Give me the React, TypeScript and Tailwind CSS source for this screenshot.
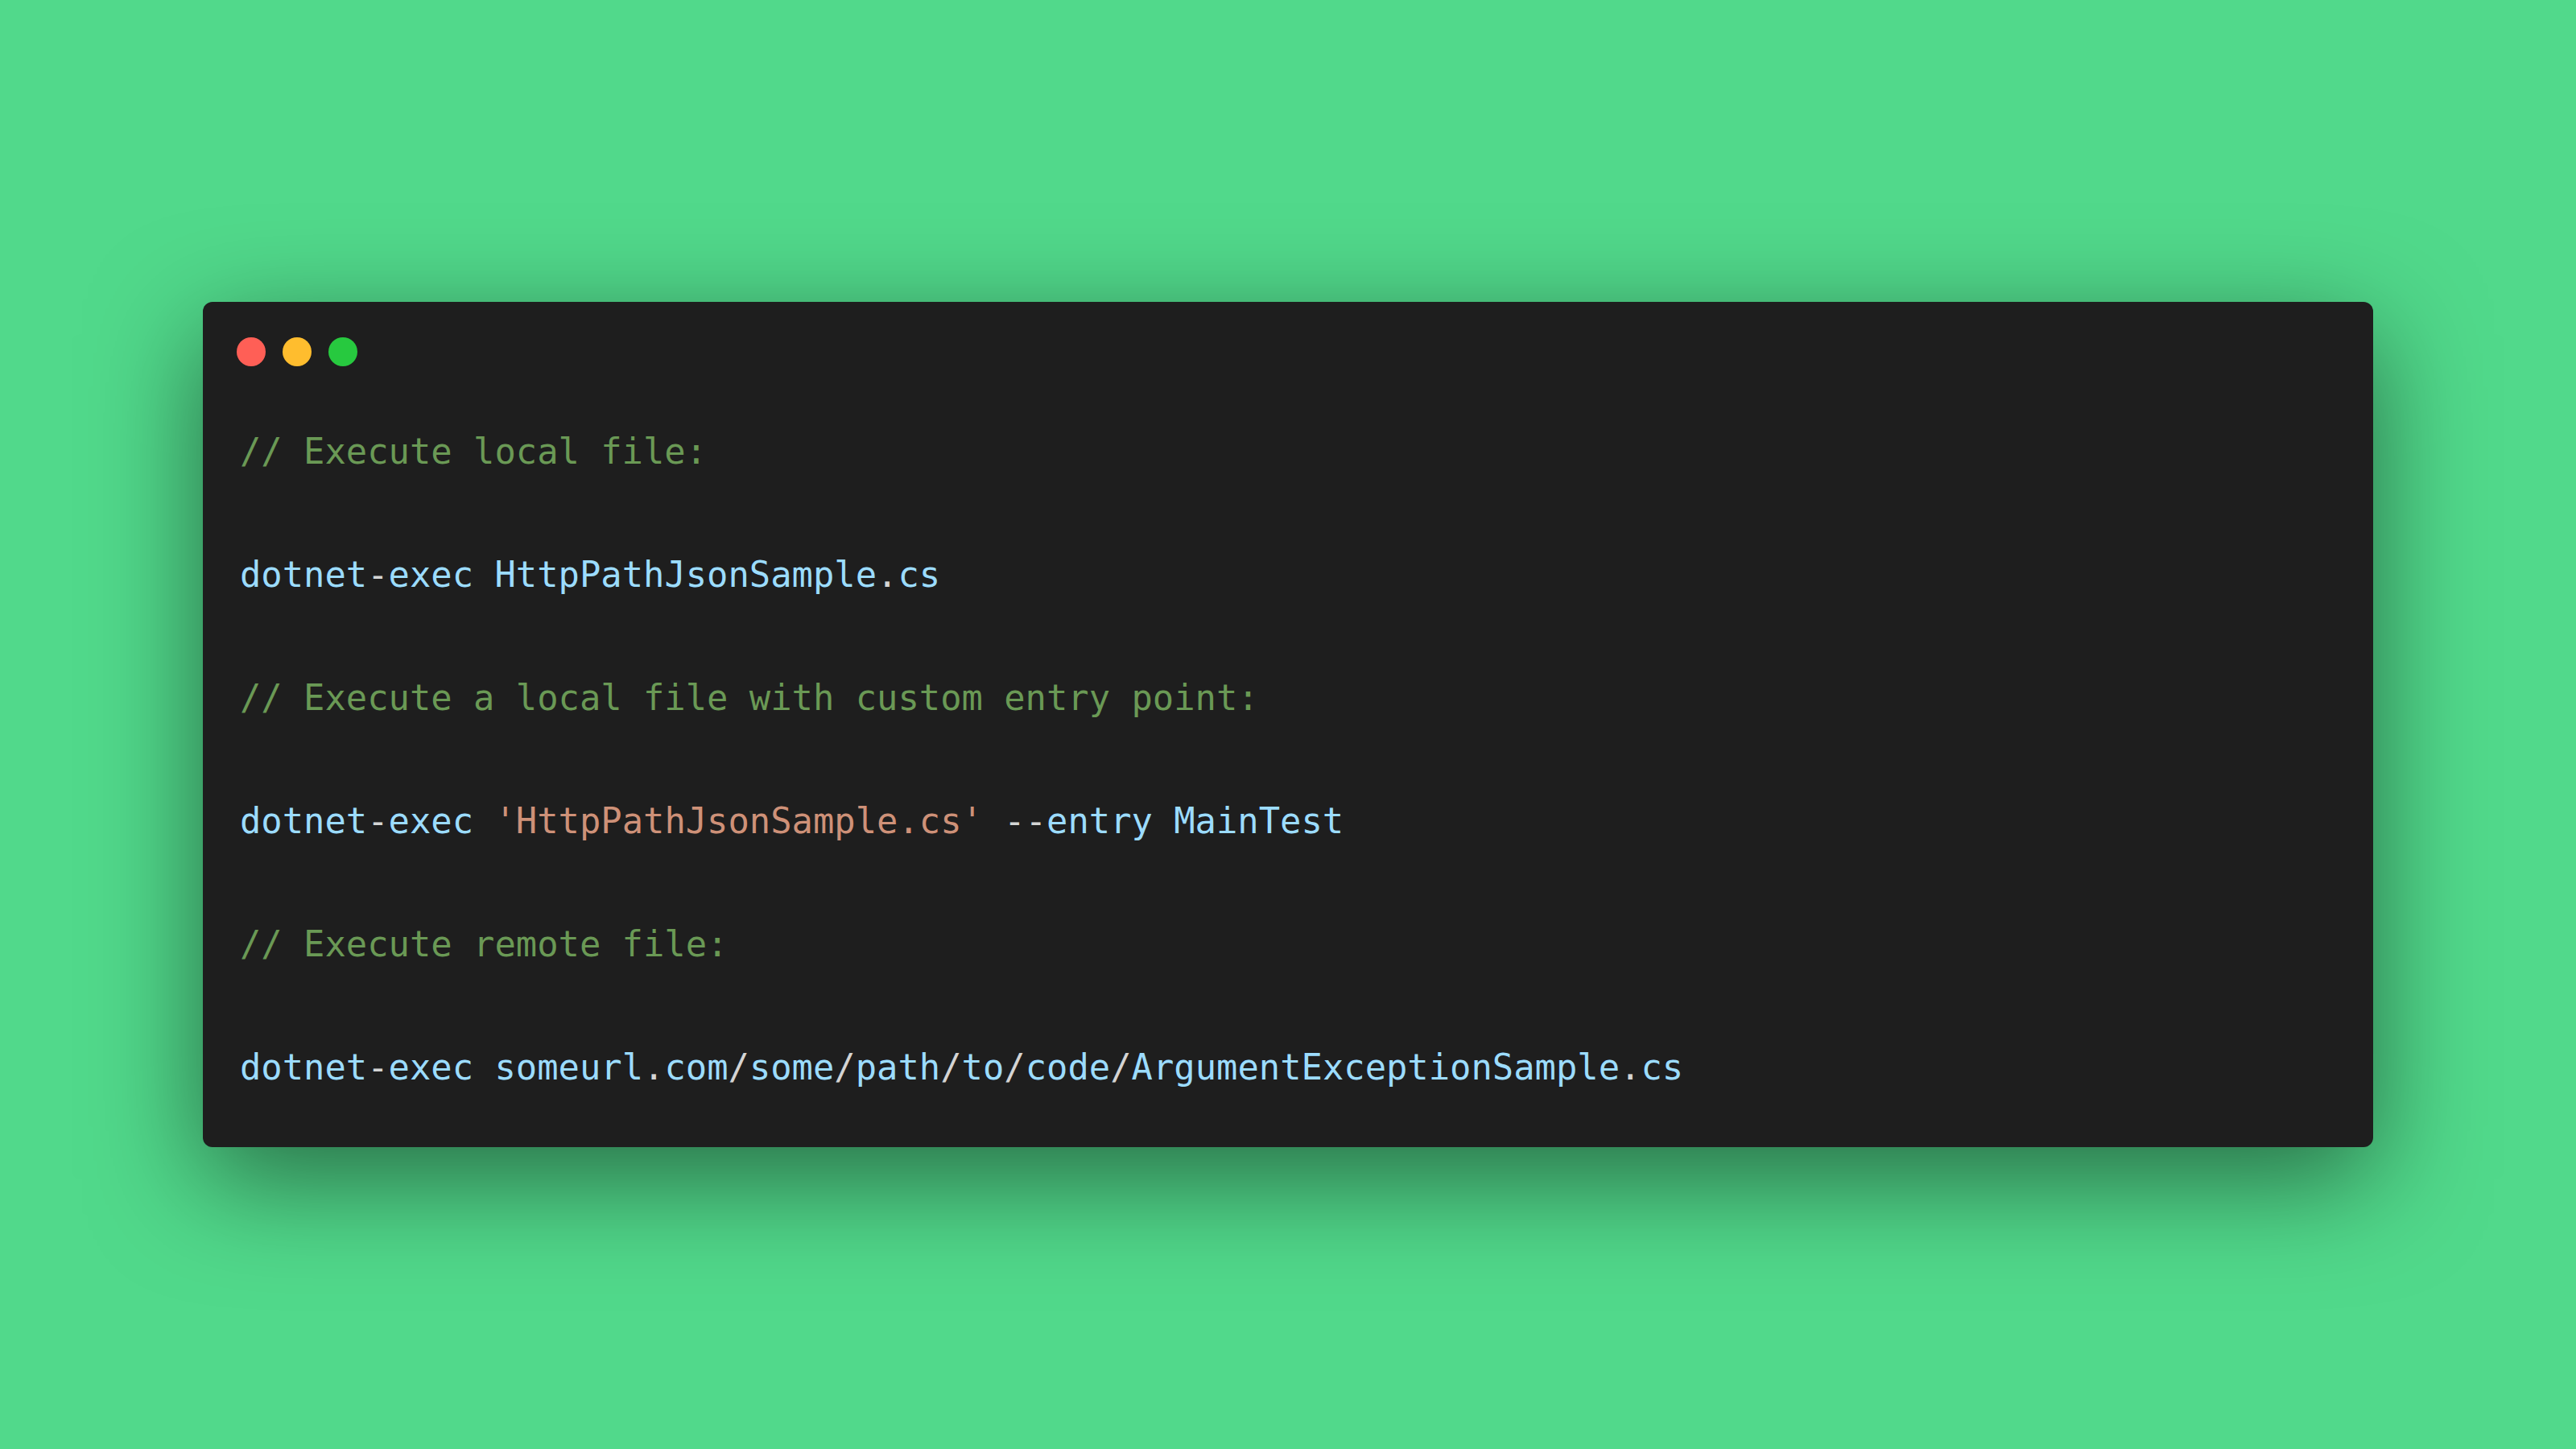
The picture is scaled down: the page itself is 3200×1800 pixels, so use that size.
type Tok = [string, string];

const B = "text-[#9cdcfe]";
const W = "text-[#d4d4d4]";
const S = "text-[#ce9178]";
const C = "text-[#6a9955]";

const lines: (Tok[] | null)[] = [
  [["// Execute local file:", C]],
  null,
  [
    ["dotnet", B],
    ["-", W],
    ["exec HttpPathJsonSample", B],
    [".", W],
    ["cs", B],
  ],
  null,
  [["// Execute a local file with custom entry point:", C]],
  null,
  [
    ["dotnet", B],
    ["-", W],
    ["exec ", B],
    ["'HttpPathJsonSample.cs'", S],
    [" ", B],
    ["--", W],
    ["entry MainTest", B],
  ],
  null,
  [["// Execute remote file:", C]],
  null,
  [
    ["dotnet", B],
    ["-", W],
    ["exec someurl", B],
    [".", W],
    ["com", B],
    ["/", W],
    ["some", B],
    ["/", W],
    ["path", B],
    ["/", W],
    ["to", B],
    ["/", W],
    ["code", B],
    ["/", W],
    ["ArgumentExceptionSample", B],
    [".", W],
    ["cs", B],
  ],
];

export default function App() {
  return (
    <div className="w-[3200px] h-[1800px] bg-[#51d98b] flex items-center justify-center">
      <div className="w-[2696px] bg-[#1e1e1e] rounded-[12px] shadow-[0_40px_136px_rgba(0,0,0,0.5)] pt-[44px] pb-[61px] px-[42px]">
        <div className="flex gap-[21px]">
          <span className="w-[36px] h-[36px] rounded-full bg-[#ff5f56]" />
          <span className="w-[36px] h-[36px] rounded-full bg-[#ffbd2e]" />
          <span className="w-[36px] h-[36px] rounded-full bg-[#27c93f]" />
        </div>
        <div className="mt-[68px] pl-[4px] font-['DejaVu_Sans_Mono',monospace] text-[43.8px] leading-[76.5px] whitespace-pre">
          {lines.map((l, i) =>
            l ? (
              <div key={i}>
                {l.map(([t, c], j) => (
                  <span key={j} className={c}>
                    {t}
                  </span>
                ))}
              </div>
            ) : (
              <div key={i} className="h-[76.5px]" />
            )
          )}
        </div>
      </div>
    </div>
  );
}
